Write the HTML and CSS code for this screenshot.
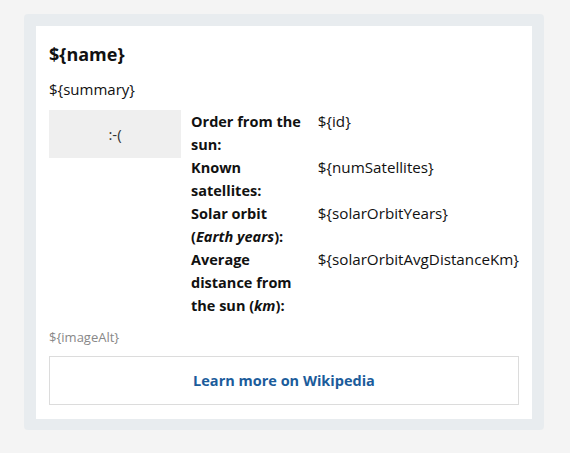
FILE: index.html
```html
<!DOCTYPE html>
<html lang="en">
<head>
    <meta charset="UTF-8">
    <meta name="viewport" content="width=device-width, initial-scale=1.0">
    <title>Planet card</title>
    <link rel="stylesheet" href="styles.css">
</head>
<body>
    <div class="card">
        <div class="card-inner">
            <h2 class="planet-name">${name}</h2>
            <p class="summary">${summary}</p>

            <div class="details">
                <div class="image-box">:-(</div>
                <table class="facts">
                    <tr>
                        <th>Order from the sun:</th>
                        <td>${id}</td>
                    </tr>
                    <tr>
                        <th>Known satellites:</th>
                        <td>${numSatellites}</td>
                    </tr>
                    <tr>
                        <th>Solar orbit (<em>Earth years</em>):</th>
                        <td>${solarOrbitYears}</td>
                    </tr>
                    <tr>
                        <th>Average distance from the sun (<em>km</em>):</th>
                        <td>${solarOrbitAvgDistanceKm}</td>
                    </tr>
                </table>
            </div>

            <p class="image-alt">${imageAlt}</p>

            <a class="wiki-button" href="#">Learn more on Wikipedia</a>
        </div>
    </div>
</body>
</html>
```

FILE: styles.css
```css
body {
    font-family: 'Open Sans', 'Segoe UI', sans-serif;
    background: #f4f4f4;
    margin: 0;
    padding: 14px 26px 0 24px;
    color: #111;
}

.card {
    background: #e8ecef;
    border-radius: 4px;
    padding: 12px 12px 11px 12px;
}

.card-inner {
    background: white;
    padding: 15px 13px 14px 13px;
}

.planet-name {
    margin: 0;
    font-size: 18px;
    line-height: 26px;
    font-weight: 700;
}

.summary {
    margin: 10px 0 0 0;
    font-size: 15px;
    line-height: 24px;
}

.details {
    display: flex;
    align-items: flex-start;
    gap: 10px;
    margin-top: 9px;
}

.image-box {
    flex: 0 0 132px;
    height: 48px;
    background: #efefef;
    display: flex;
    align-items: center;
    justify-content: center;
    font-size: 15px;
    color: #333;
}

.facts {
    border-collapse: collapse;
    font-size: 15.2px;
    line-height: 23px;
}

.facts th {
    text-align: left;
    vertical-align: top;
    font-weight: 700;
    font-size: 14.5px;
    width: 117px;
    padding: 0 10px 0 0;
}

.facts td {
    vertical-align: top;
    padding: 0;
}

.image-alt {
    margin: 11px 0 0 0;
    font-size: 13px;
    line-height: 18px;
    color: #888;
}

.wiki-button {
    display: block;
    margin-top: 10px;
    border: 1px solid #dcdcdc;
    height: 47px;
    line-height: 47px;
    text-align: center;
    text-decoration: none;
    color: #1b5c9b;
    font-weight: 700;
    font-size: 14.5px;
}
```
